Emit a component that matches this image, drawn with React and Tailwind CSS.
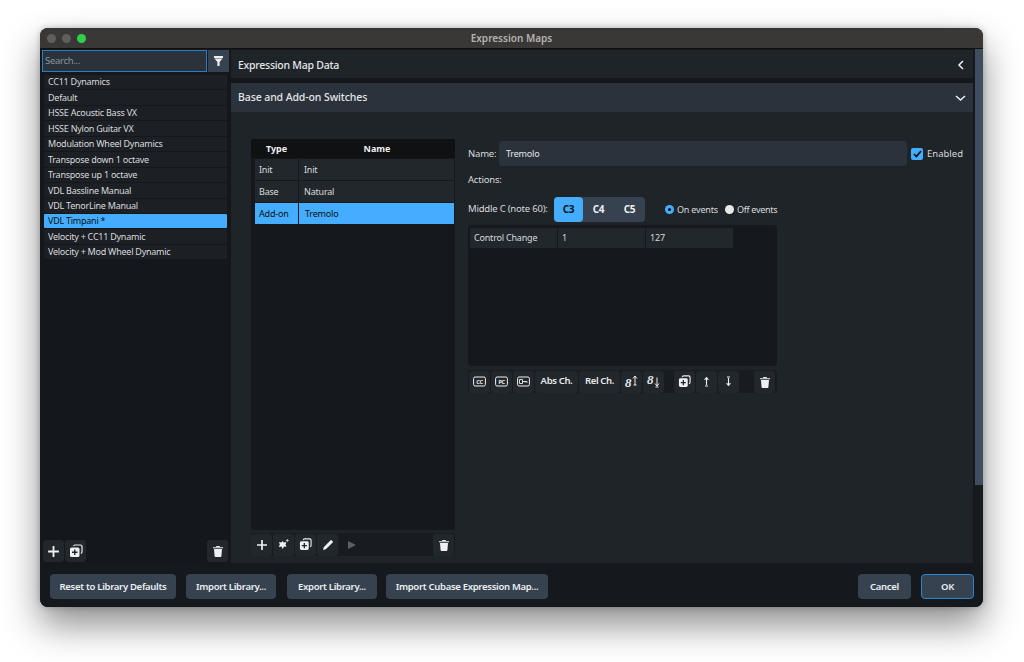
const font = { fontFamily: '"Noto Sans", sans-serif' };

const items = ['CC11 Dynamics','Default','HSSE Acoustic Bass VX','HSSE Nylon Guitar VX','Modulation Wheel Dynamics','Transpose down 1 octave','Transpose up 1 octave','VDL Bassline Manual','VDL TenorLine Manual','VDL Timpani *','Velocity + CC11 Dynamic','Velocity + Mod Wheel Dynamic'];

const Plus = ({ s = 12 }) => (
  <svg width={s} height={s} viewBox="0 0 12 12"><path d="M6 1v10M1 6h10" stroke="#eef0f2" strokeWidth="1.7" fill="none" /></svg>
);
const Dup = ({ s = 14 }) => (
  <svg width={s} height={s} viewBox="0 0 14 14" fill="none">
    <path d="M4.5 2.2Q4.8 1 6 1h5.5Q13 1 13 2.5V8q0 1.2-1.2 1.5" stroke="#eef0f2" strokeWidth="1.2" />
    <rect x="1" y="3.5" width="9.5" height="9.5" rx="1.6" fill="#eef0f2" />
    <path d="M5.75 5.5v5.5M3 8.25h5.5" stroke="#20252b" strokeWidth="1.4" />
  </svg>
);
const Trash = ({ s = 12 }) => (
  <svg width={s} height={s} viewBox="0 0 12 12"><path d="M1 2.2h10v1H1zM4.2 1h3.6v1H4.2zM2 4h8l-.6 7.2q-.1.8-.9.8h-5q-.8 0-.9-.8z" fill="#eef0f2" /></svg>
);
const Pencil = () => (
  <svg width="12" height="12" viewBox="0 0 12 12"><path d="M1 11l.7-2.8L8.6 1.3q.5-.5 1 0l1.1 1.1q.5.5 0 1L3.8 10.3z" fill="#eef0f2" /></svg>
);
const Spark = () => (
  <svg width="13" height="13" viewBox="0 0 13 13" fill="#eef0f2">
    <path d="M2 4l2.4.4L5.5 3l1.3 1.5L9.4 4 8.5 6.4l1 2.3-2.5-.3L5.6 11 4.5 8.6 1.8 9l1-2.4z" />
    <path d="M10.3 1v3M8.8 2.5h3" stroke="#eef0f2" strokeWidth=".7" />
  </svg>
);
const Btn = ({ children, className = 'w-[21px]' }) => (
  <div className={`h-[22px] ${className} rounded-[3px] bg-[#22272c] flex items-center justify-center text-[#e6e8ea] text-[9.5px] tracking-[-0.35px] font-semibold shrink-0`}>{children}</div>
);
const Tag = ({ t }) => (
  <svg width="13" height="11" viewBox="0 0 13 11">
    <rect x=".6" y="1" width="11.8" height="9" rx="1.5" fill="none" stroke="#eef0f2" strokeWidth="1" />
    <text x="6.5" y="7.6" textAnchor="middle" fontSize="5.5" fontWeight="700" fill="#eef0f2" style={font}>{t}</text>
  </svg>
);
const Key = () => (
  <svg width="13" height="11" viewBox="0 0 13 11" fill="none" stroke="#eef0f2">
    <rect x=".6" y="1" width="11.8" height="9" rx="1.5" />
    <path d="M2.5 3.5h3v4h-3zM5.5 5.5h4.5M10 5.5v1.3M8 5.5v1" strokeWidth=".9" />
  </svg>
);
const Octave = ({ up }) => (
  <span className="relative flex items-center gap-px font-['Liberation_Serif'] italic text-[13px] font-bold">
    <span className={up ? 'mt-[3px]' : 'mb-[3px]'}>8</span>
    <svg width="6" height="11" viewBox="0 0 6 11" className={up ? '-mt-[2px]' : 'mt-[2px]'}>
      {up ? <path d="M3 1.5v8.5M1 3.5L3 1l2 2.5M1.5 10h3" stroke="#eef0f2" fill="none" strokeWidth="1" /> : <path d="M3 .5v8.5M1 6.5L3 9l2-2.5M1.5 10h3" stroke="#eef0f2" fill="none" strokeWidth="1" />}
    </svg>
  </span>
);
const Arrow = ({ up }) => (
  <svg width="7" height="11" viewBox="0 0 7 11">
    {up ? <path d="M3.5 2v7M1.6 3.8L3.5 1.5l1.9 2.3M2 10h3" stroke="#eef0f2" strokeWidth="1.1" fill="none" /> : <path d="M3.5 2v7M1.6 7.2L3.5 9.5l1.9-2.3M2 1h3" stroke="#eef0f2" strokeWidth="1.1" fill="none" />}
  </svg>
);
const FootBtn = ({ children, className = '' }) => (
  <div className={`h-[25px] pt-px rounded-[4px] bg-[#36424f] flex items-center justify-center text-[9.5px] font-semibold text-[#eceef0] tracking-[-0.3px] ${className}`}>{children}</div>
);

function Row({ type, name, selected }) {
  const bg = selected ? 'bg-[#44adff] text-[#0b1016]' : 'bg-[#22272c] text-[#d8dadc]';
  return (
    <div className="flex gap-px h-[21px] mb-px pl-[4px] pr-px text-[9px] tracking-[-0.2px]">
      <div className={`w-[43px] ${bg} flex items-center pl-[4px]`}>{type}</div>
      <div className={`flex-1 ${bg} flex items-center ${selected ? 'pl-[6px]' : 'pl-[5px]'}`}>{name}</div>
    </div>
  );
}

export default function App() {
  return (
    <div className="w-[1024px] h-[662px] bg-white overflow-hidden pt-[28px] pl-[40px] whitespace-nowrap" style={font}>
      <div className="w-[943px] h-[579px] rounded-[8px] bg-[#14171b] overflow-hidden flex flex-col shadow-[0_18px_36px_rgba(0,0,0,0.45),0_0_6px_rgba(0,0,0,0.25)]">
        {/* Title bar */}
        <div className="h-[21px] shrink-0 bg-[#3a3836] border-b border-[#111] flex items-center relative">
          <div className="flex gap-[6px] pl-[7px]">
            <span className="w-[9px] h-[9px] rounded-full bg-[#605e5c]" />
            <span className="w-[9px] h-[9px] rounded-full bg-[#605e5c]" />
            <span className="w-[9px] h-[9px] rounded-full bg-[#2fd14a]" />
          </div>
          <div className="absolute inset-0 flex items-center justify-center text-[10px] font-semibold text-[#b5b3b1]">Expression Maps</div>
        </div>

        {/* Body */}
        <div className="flex-1 flex min-h-0">
          {/* Sidebar */}
          <div className="w-[190px] shrink-0 flex flex-col pl-[2px] pr-px pt-px">
            <div className="flex gap-px h-[22px]">
              <div className="flex-1 bg-[#2a323c] border border-[#2a7fc4] flex items-center pl-[2px] text-[9.5px] tracking-[-0.3px] text-[#8b929a]">Search...</div>
              <div className="w-[21px] bg-[#36424f] flex items-center justify-center">
                <svg width="9" height="10" viewBox="0 0 9 10"><path d="M0 0h9v2H0zM.5 2.5h8L5.6 6v4H3.4V6z" fill="#eef0f2" /></svg>
              </div>
            </div>
            <div className="flex flex-col pt-[3px] pl-[2px] pr-[2px] flex-1">
              {items.map((t) => {
                const sel = t === 'VDL Timpani *';
                return (
                  <div key={t} className={`h-[14.45px] mb-px flex items-center pl-[4px] text-[9px] tracking-[-0.25px] rounded-[1px] ${sel ? 'bg-[#44adff] text-[#0b1016]' : 'bg-[#1c2025] text-[#d8dadc]'}`}>{t}</div>
                );
              })}
            </div>
            <div className="flex items-center pb-px pl-px pr-[1px] gap-px">
              <Btn><Plus s={13} /></Btn>
              <Btn><Dup /></Btn>
              <div className="flex-1" />
              <Btn><Trash /></Btn>
            </div>
          </div>

          {/* Main */}
          <div className="flex-1 flex flex-col min-w-0 pt-px pl-px">
            <div className="h-[28px] shrink-0 bg-[#1f2429] flex items-center justify-between pl-[7px] pr-[8px] mr-[10px] text-[10.5px] tracking-[-0.25px] font-medium text-[#e4e6e8]">
              <span className="mt-[3px]">Expression Map Data</span>
              <svg width="8" height="10" viewBox="0 0 8 10" className="mt-[2px]"><path d="M6 1L2 5l4 4" stroke="#eef0f2" strokeWidth="1.5" fill="none" /></svg>
            </div>
            <div className="flex-1 flex min-h-0 mt-[5px]">
              <div className="flex-1 flex flex-col min-w-0 mr-[2px]">
                <div className="h-[29px] shrink-0 bg-[#2a323c] flex items-center justify-between pl-[7px] pr-[7px] text-[10.5px] tracking-[-0.1px] font-medium text-[#e4e6e8]">
                  <span className="mt-px">Base and Add-on Switches</span>
                  <svg width="11" height="8" viewBox="0 0 11 8"><path d="M1 2l4.5 4L10 2" stroke="#eef0f2" strokeWidth="1.5" fill="none" /></svg>
                </div>
                <div className="flex-1 bg-[#1f2429] flex pl-[20px] pt-[27px] pb-[7px] min-h-0">
                  {/* Left table */}
                  <div className="w-[204px] shrink-0 flex flex-col">
                    <div className="h-[391px] bg-[#15181c] rounded-[3px] overflow-hidden">
                      <div className="h-[19px] bg-[#0f1113] flex text-[9px] font-bold text-[#eef0f2] items-center">
                        <div className="w-[48px] text-center pl-[3px]">Type</div>
                        <div className="flex-1 text-center">Name</div>
                      </div>
                      <div className="pt-px">
                        <Row type="Init" name="Init" />
                        <Row type="Base" name="Natural" />
                        <Row type="Add-on" name="Tremolo" selected />
                      </div>
                    </div>
                    <div className="mt-[3px] h-[23px] bg-[#181b1f] rounded-[3px] flex items-center gap-px pr-px">
                      <Btn><Plus /></Btn>
                      <Btn><Spark /></Btn>
                      <Btn><Dup s={13} /></Btn>
                      <Btn><Pencil /></Btn>
                      <div className="ml-[9px] w-0 h-0 border-y-[4.5px] border-y-transparent border-l-[8px] border-l-[#5c6064]" />
                      <div className="flex-1" />
                      <Btn><Trash /></Btn>
                    </div>
                  </div>

                  {/* Right form */}
                  <div className="flex-1 min-w-0 pl-[13px] pt-[2px] flex flex-col text-[9px] tracking-[-0.2px] text-[#d8dadc]">
                    <div className="flex items-center h-[25px]">
                      <span className="w-[31px] shrink-0 text-[9.5px] mt-px">Name:</span>
                      <div className="w-[408px] h-[25px] pt-px rounded-[3px] bg-[#2a323c] flex items-center pl-[7px] text-[#e4e6e8]">Tremolo</div>
                      <span className="ml-[4px] w-[12px] h-[12px] rounded-[2px] bg-[#44adff] flex items-center justify-center">
                        <svg width="9" height="8" viewBox="0 0 9 8"><path d="M1 4l2.4 2.5L8 1" stroke="#0b1016" strokeWidth="1.8" fill="none" /></svg>
                      </span>
                      <span className="ml-[4px] text-[9.5px] tracking-normal mt-px">Enabled</span>
                    </div>
                    <div className="h-[13px] mt-[8px] flex items-center text-[9.5px]">Actions:</div>
                    <div className="flex items-center mt-[10px] h-[25px]">
                      <span className="w-[86px] shrink-0 text-[9.5px]">Middle C (note 60):</span>
                      <div className="w-[91px] h-[25px] rounded-[4px] bg-[#36424f] flex text-[10px] font-bold text-[#eef0f2]">
                        <div className="w-[29px] rounded-[4px] bg-[#44adff] text-[#0b1016] flex items-center justify-center">C3</div>
                        <div className="w-[31px] flex items-center justify-center">C4</div>
                        <div className="w-[31px] flex items-center justify-center">C5</div>
                      </div>
                      <span className="ml-[20px] w-[9px] h-[9px] rounded-full bg-[#44adff] flex items-center justify-center"><span className="w-[3px] h-[3px] rounded-full bg-[#0b1016]" /></span>
                      <span className="ml-[3px] w-[48px]">On events</span>
                      <span className="w-[9px] h-[9px] rounded-full bg-[#e8e8e8]" />
                      <span className="ml-[3px] tracking-[-0.3px]">Off events</span>
                    </div>
                    <div className="w-[309px] h-[141px] mt-[3px] bg-[#15181c] rounded-[4px] pt-[3px] pl-[2px]">
                      <div className="flex gap-px h-[20px]">
                        <div className="w-[87px] bg-[#22272c] flex items-center pl-[4px]">Control Change</div>
                        <div className="w-[87px] bg-[#22272c] flex items-center pl-[4px]">1</div>
                        <div className="w-[87px] bg-[#22272c] flex items-center pl-[4px]">127</div>
                      </div>
                    </div>
                    <div className="w-[309px] h-[23px] mt-[4px] bg-[#181b1f] rounded-[3px] flex items-center gap-px pl-px">
                      <Btn><Tag t="CC" /></Btn>
                      <Btn><Tag t="PC" /></Btn>
                      <Btn><Key /></Btn>
                      <Btn className="w-[43px]">Abs Ch.</Btn>
                      <Btn className="w-[41px]">Rel Ch.</Btn>
                      <Btn><Octave up /></Btn>
                      <Btn><Octave /></Btn>
                      <div className="w-[8px]" />
                      <Btn><Dup s={13} /></Btn>
                      <Btn><Arrow up /></Btn>
                      <Btn><Arrow /></Btn>
                      <div className="w-[13px]" />
                      <Btn><Trash /></Btn>
                    </div>
                  </div>
                </div>
              </div>
              {/* Scrollbar */}
              <div className="w-[8px] shrink-0 -mt-[34px] flex flex-col">
                <div className="h-[436px] bg-[#3f4e5f]" />
                <div className="flex-1 bg-[#171a1e]" />
              </div>
            </div>
          </div>
        </div>

        {/* Footer */}
        <div className="h-[44px] shrink-0 bg-[#15181c] flex items-start pt-[11px] pl-[10px] pr-[9px]">
          <FootBtn className="w-[126px]">Reset to Library Defaults</FootBtn>
          <FootBtn className="w-[90px] ml-[10px]">Import Library...</FootBtn>
          <FootBtn className="w-[90px] ml-[11px]">Export Library...</FootBtn>
          <FootBtn className="w-[162px] ml-[9px]">Import Cubase Expression Map...</FootBtn>
          <div className="flex-1" />
          <FootBtn className="w-[53px]">Cancel</FootBtn>
          <FootBtn className="w-[53px] ml-[10px] border border-[#2a84d0]">OK</FootBtn>
        </div>
      </div>
    </div>
  );
}
